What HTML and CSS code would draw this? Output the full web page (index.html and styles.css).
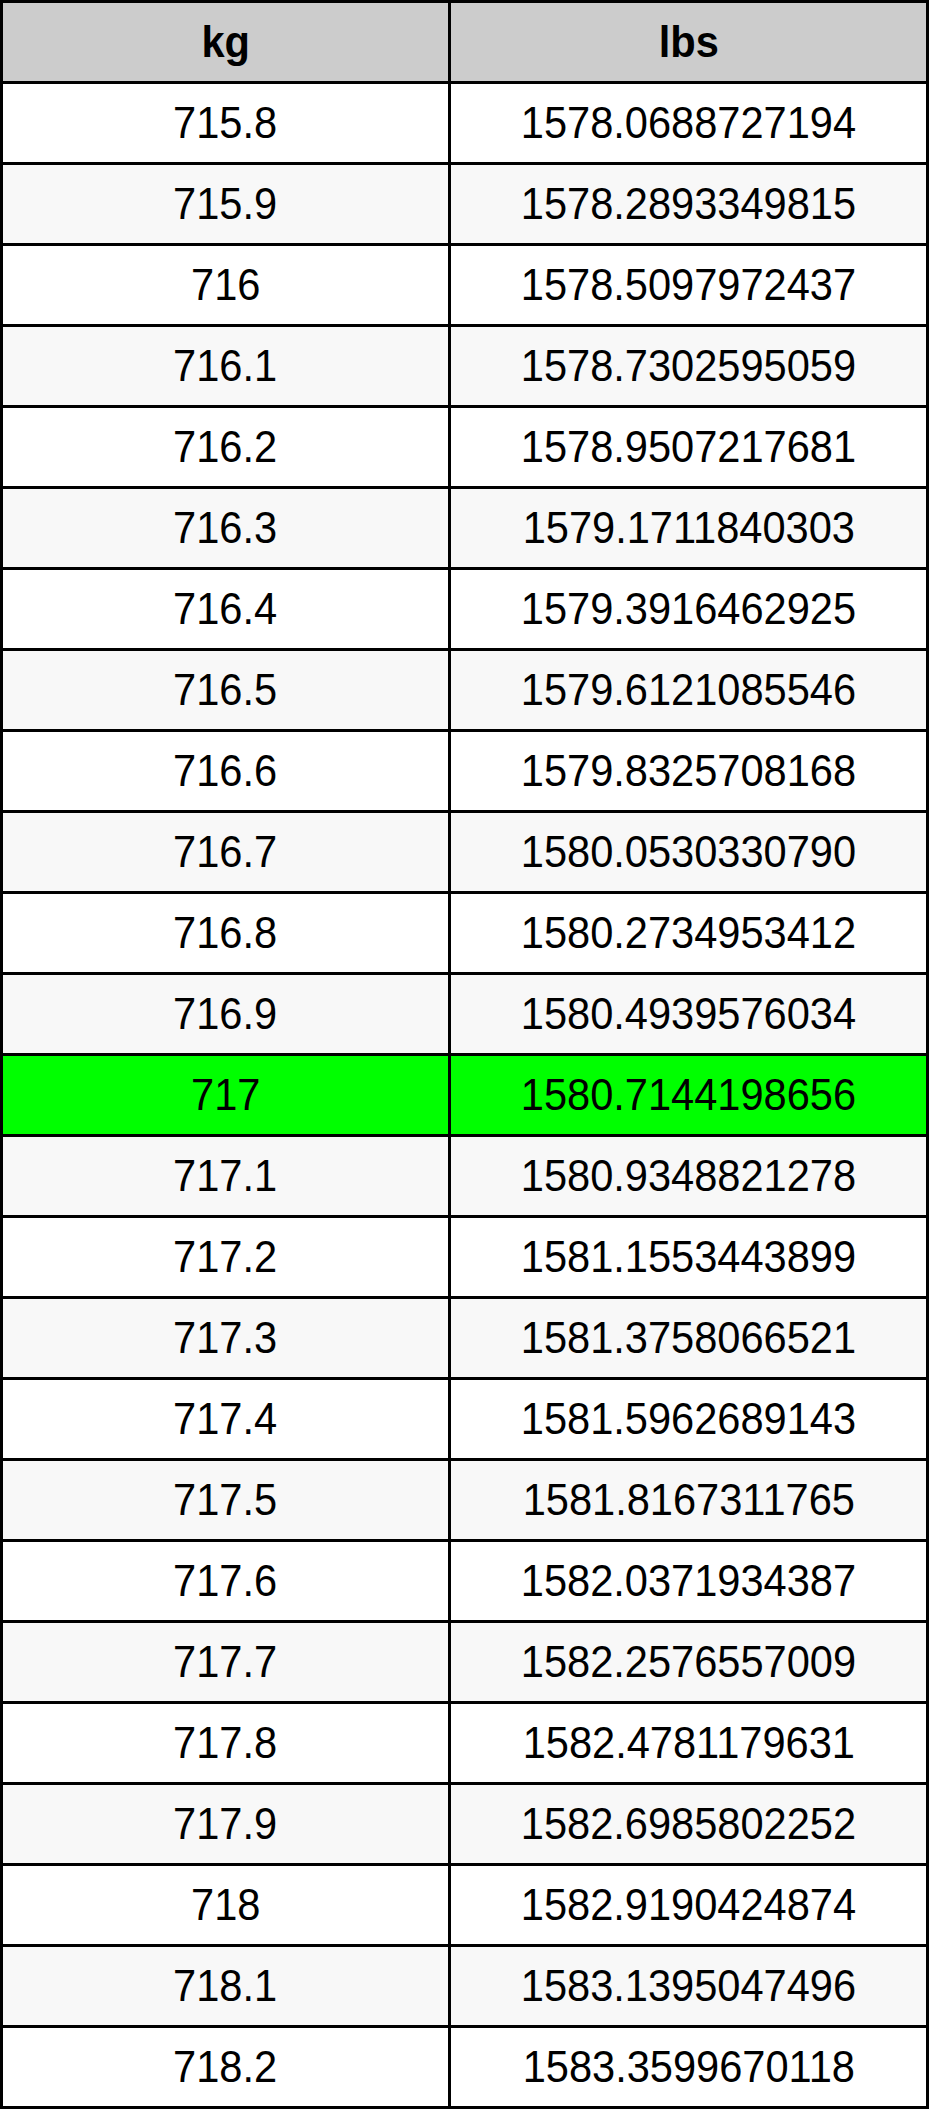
FILE: index.html
```html
<!DOCTYPE html>
<html>
<head>
<meta charset="utf-8">
<link rel="stylesheet" href="styles.css">
</head>
<body>
<table class="conv">
<thead>
<tr><th class="c1"><span class="t">kg</span></th><th class="c2"><span class="t">lbs</span></th></tr>
</thead>
<tbody>
<tr><td><span class="t">715.8</span></td><td><span class="t">1578.0688727194</span></td></tr>
<tr class="alt"><td><span class="t">715.9</span></td><td><span class="t">1578.2893349815</span></td></tr>
<tr><td><span class="t">716</span></td><td><span class="t">1578.5097972437</span></td></tr>
<tr class="alt"><td><span class="t">716.1</span></td><td><span class="t">1578.7302595059</span></td></tr>
<tr><td><span class="t">716.2</span></td><td><span class="t">1578.9507217681</span></td></tr>
<tr class="alt"><td><span class="t">716.3</span></td><td><span class="t">1579.1711840303</span></td></tr>
<tr><td><span class="t">716.4</span></td><td><span class="t">1579.3916462925</span></td></tr>
<tr class="alt"><td><span class="t">716.5</span></td><td><span class="t">1579.6121085546</span></td></tr>
<tr><td><span class="t">716.6</span></td><td><span class="t">1579.8325708168</span></td></tr>
<tr class="alt"><td><span class="t">716.7</span></td><td><span class="t">1580.0530330790</span></td></tr>
<tr><td><span class="t">716.8</span></td><td><span class="t">1580.2734953412</span></td></tr>
<tr class="alt"><td><span class="t">716.9</span></td><td><span class="t">1580.4939576034</span></td></tr>
<tr class="hl"><td><span class="t">717</span></td><td><span class="t">1580.7144198656</span></td></tr>
<tr class="alt"><td><span class="t">717.1</span></td><td><span class="t">1580.9348821278</span></td></tr>
<tr><td><span class="t">717.2</span></td><td><span class="t">1581.1553443899</span></td></tr>
<tr class="alt"><td><span class="t">717.3</span></td><td><span class="t">1581.3758066521</span></td></tr>
<tr><td><span class="t">717.4</span></td><td><span class="t">1581.5962689143</span></td></tr>
<tr class="alt"><td><span class="t">717.5</span></td><td><span class="t">1581.8167311765</span></td></tr>
<tr><td><span class="t">717.6</span></td><td><span class="t">1582.0371934387</span></td></tr>
<tr class="alt"><td><span class="t">717.7</span></td><td><span class="t">1582.2576557009</span></td></tr>
<tr><td><span class="t">717.8</span></td><td><span class="t">1582.4781179631</span></td></tr>
<tr class="alt"><td><span class="t">717.9</span></td><td><span class="t">1582.6985802252</span></td></tr>
<tr><td><span class="t">718</span></td><td><span class="t">1582.9190424874</span></td></tr>
<tr class="alt"><td><span class="t">718.1</span></td><td><span class="t">1583.1395047496</span></td></tr>
<tr><td><span class="t">718.2</span></td><td><span class="t">1583.3599670118</span></td></tr>
</tbody>
</table>
</body>
</html>
```
FILE: styles.css
```css
html, body {
  margin: 0;
  padding: 0;
  background: #ffffff;
}
.conv {
  border-collapse: separate;
  border-spacing: 0;
  table-layout: fixed;
  width: 929px;
  border-top: 3px solid #000;
  border-left: 3px solid #000;
  font-family: "Liberation Sans", Arial, sans-serif;
  font-size: 44px;
  color: #000;
}
.conv th, .conv td {
  border-right: 3px solid #000;
  border-bottom: 3px solid #000;
  height: 78px;
  padding: 0;
  text-align: center;
  vertical-align: middle;
  line-height: 78px;
  overflow: hidden;
  white-space: nowrap;
}
.conv .t {
  display: inline-block;
  transform: scaleX(0.945);
  transform-origin: center;
}
.conv th {
  background: #cccccc;
  font-weight: bold;
}
.conv .c1 {
  width: 445px;
}
.conv .c2 {
  width: 475px;
}
.conv tbody tr td {
  background: #ffffff;
}
.conv tbody tr.alt td {
  background: #f8f8f8;
}
.conv tbody tr.hl td {
  background: #00ff00;
}
```
